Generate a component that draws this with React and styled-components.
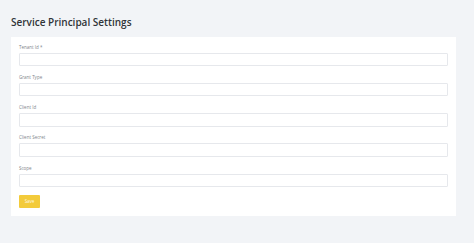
import React from "react";
import styled, { createGlobalStyle } from "styled-components";

const GlobalStyle = createGlobalStyle`
  html, body {
    margin: 0;
    padding: 0;
    background: #f2f4f7;
    font-family: "Open Sans", "Noto Sans", sans-serif;
  }
`;

const Page = styled.div`
  min-height: 243px;
  padding: 11px 18px 0 11px;
  box-sizing: border-box;
`;

const Title = styled.h1`
  margin: 0;
  font-size: 10px;
  line-height: 18px;
  font-weight: 600;
  color: #303438;
  padding-top: 2px;
`;

const Card = styled.div`
  margin-top: 6px;
  background: #ffffff;
  padding: 6.5px 8px 8px 8px;
  box-sizing: border-box;
`;

const Field = styled.div`
  display: flex;
  flex-direction: column;
  margin-bottom: 7.8px;
`;

const Label = styled.label`
  font-size: 4.5px;
  line-height: 6px;
  color: #80858b;
  margin-bottom: 3px;
`;

const Input = styled.input`
  height: 13.5px;
  box-sizing: border-box;
  border: 1px solid #e6e8ec;
  border-radius: 1px;
  background: #ffffff;
  padding: 0 4px;
  outline: none;
`;

const SaveButton = styled.button`
  width: 21px;
  height: 13px;
  border: none;
  border-radius: 1px;
  background: #f3cb3b;
  color: #fff8e0;
  font-family: inherit;
  font-size: 4.5px;
  padding: 0;
  display: block;
`;

const fields = ["Tenant Id *", "Grant Type", "Client Id", "Client Secret", "Scope"];

const App = () => {
  return (
    <Page>
      <GlobalStyle />
      <Title>Service Principal Settings</Title>
      <Card>
        {fields.map((f) => (
          <Field key={f}>
            <Label>{f}</Label>
            <Input type={f === "Client Secret" ? "password" : "text"} />
          </Field>
        ))}
        <SaveButton>Save</SaveButton>
      </Card>
    </Page>
  );
};

export default App;
